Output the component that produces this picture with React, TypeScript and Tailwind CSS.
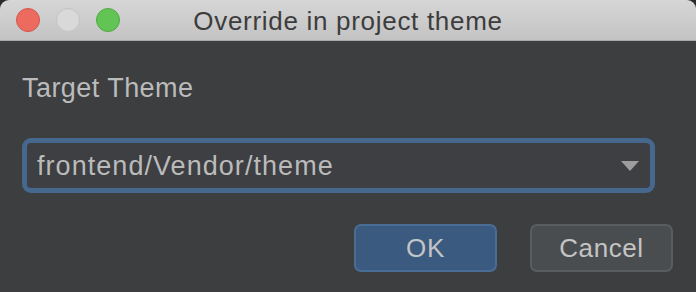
export default function App() {
  const font = { fontFamily: '"Liberation Sans", Arial, sans-serif' }

  return (
    <div className="w-[696px] h-[292px] bg-[#2a2a2a] overflow-hidden" style={font}>
      <div className="h-full flex flex-col rounded-t-[9px] overflow-hidden bg-[#3c3e40]">
        {/* title bar */}
        <div className="h-[41px] shrink-0 grid grid-cols-[1fr_auto_1fr] items-center bg-gradient-to-b from-[#d6d6d6] to-[#c3c3c3] border-b border-[#a9a9a9]">
          <div className="flex items-center gap-4 pl-4">
            <span className="w-6 h-6 rounded-full bg-[#ec6a5e] border border-[#d2574c]" />
            <span className="w-6 h-6 rounded-full bg-[#d9d9d9] border border-[#c2c2c2]" />
            <span className="w-6 h-6 rounded-full bg-[#61c454] border border-[#52a842]" />
          </div>
          <div className="text-[26px] leading-[30px] tracking-[0.7px] text-[#3d3d3d] mt-[1px]">
            Override in project theme
          </div>
          <div />
        </div>

        {/* body */}
        <div className="flex flex-col px-[22px] text-[#bbbbbb]">
          <div className="mt-[32px] text-[27px] leading-[30px] tracking-[0.45px]">Target Theme</div>

          <div className="mt-[35px] h-[55px] rounded-[9px] bg-[#46688f] p-[5px] mr-[19px]">
            <div className="h-full rounded-[4px] bg-[#3d3f42] flex items-center pl-[10px] pr-[11px]">
              <span className="flex-1 text-[27px] leading-[30px] tracking-[1.05px] mt-[1px]">frontend/Vendor/theme</span>
              <svg width="18" height="10" viewBox="0 0 18 10" className="shrink-0">
                <path d="M0 0 H18 L9 10 Z" fill="#9d9d9d" />
              </svg>
            </div>
          </div>

          <div className="mt-[31px] flex justify-end gap-[33px] pr-[1px]">
            <button className="w-[143px] h-[48px] rounded-[7px] bg-[#3a5a80] border-2 border-[#4a6d95] text-[26px] tracking-[0.6px] text-[#c4c4c4]">
              OK
            </button>
            <button className="w-[143px] h-[48px] rounded-[7px] bg-[#4a4d50] border-2 border-[#5a5d60] text-[26px] tracking-[0.6px] text-[#c4c4c4]">
              Cancel
            </button>
          </div>
        </div>
      </div>
    </div>
  )
}
